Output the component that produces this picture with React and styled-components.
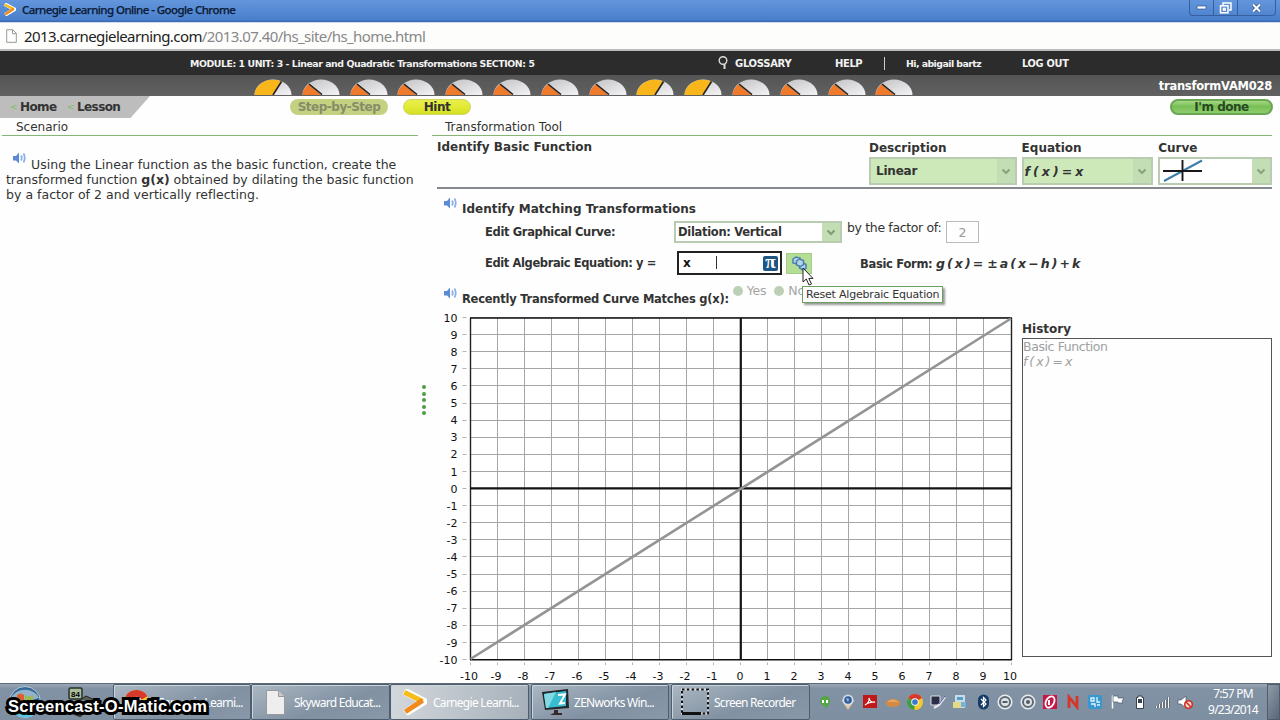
import React from "react";
import styled, { createGlobalStyle } from "styled-components";

const gauges = [
  "full", "low", "low", "low", "low", "low", "low",
  "low", "full", "full", "low", "low", "low", "low",
];
const ticks = Array.from({ length: 21 }, (_, i) => i - 10);

const Speaker = () => (
  <svg width="13" height="12" viewBox="0 0 13 12">
    <path d="M0 4h3l3-3.5v11L3 8.5H0z" fill="#5b8bd6" />
    <path d="M8 3.5q1.500 2.500 0 5M10.500 1.500q2.500 4.500 0 9" stroke="#8fb0e6" strokeWidth="1.800" fill="none" />
  </svg>
);

const Chevron = ({ color = "#8aa37c" }) => (
  <svg width="10" height="7" viewBox="0 0 10 7">
    <path d="M1.500 1.500L5 5l3.500-3.500" stroke={color} strokeWidth="2.200" fill="none" />
  </svg>
);

const CarnegieLogo = ({ size }) => (
  <svg width={size} height={size} viewBox="0 0 24 24">
    <path d="M3 2l18 9.500L4 22" fill="none" stroke="#fff" strokeWidth="7" />
    <path d="M3 3l17 8.500" stroke="#f6bd1a" strokeWidth="4.600" />
    <path d="M20 10.500L4 21" stroke="#f08a1c" strokeWidth="4.600" />
  </svg>
);

const ChromeIcon = ({ size }) => (
  <svg width={size} height={size} viewBox="0 0 24 24">
    <circle cx="12" cy="12" r="12" fill="#f3c92c" />
    <path d="M12 12L1.600 6A12 12 0 0 1 22.400 6z" fill="#d8392b" />
    <path d="M12 12L1.600 6A12 12 0 0 0 11 24z" fill="#3f9d49" />
    <circle cx="12" cy="12" r="5.600" fill="#fff" />
    <circle cx="12" cy="12" r="4.300" fill="#3c78c8" />
  </svg>
);

const Gauge = ({ type }) => (
  <svg width="38" height="16" viewBox="0 0 38 16">
    <path d="M0.500 16A18.500 15.500 0 0 1 37.500 16z" fill="url(#dial)" />
    {type === "full" ? (
      <>
        <path d="M0.500 16A18.500 15.500 0 0 1 27.500 2.500L19 16z" fill="#f8b61b" />
        <path d="M19 16L27.500 2.500" stroke="#222" strokeWidth="1.600" />
      </>
    ) : (
      <>
        <path d="M0.500 16A18.500 15.500 0 0 1 7 5L19 16z" fill="#ef7a2b" />
        <path d="M7 5L20 15.500" stroke="#222" strokeWidth="1.600" />
      </>
    )}
  </svg>
);

const Graph = () => (
  <svg width="581" height="375" viewBox="437 308 581 375">
    <rect x="470" y="318" width="541" height="342" fill="#fff" />
    {ticks.map((t) => {
      const x = Math.round(740 + t * 27.05) + 0.5;
      const y = Math.round(488 - t * 17.1) + 0.5;
      return (
        <g key={t} stroke="#a6a6a6">
          <path d={`M${x} 318V660M470 ${y}H1011`} />
          <path d={`M${x} 662.5v2.5M462.5 ${y}h4`} stroke="#b5b5b5" />
        </g>
      );
    })}
    <path d="M470.500 318V660" stroke="#222" strokeWidth="1.400" />
    <path d="M1011.500 318V660" stroke="#222" strokeWidth="1.400" />
    <path d="M470 318H1012M470 659.700H1012" stroke="#111" strokeWidth="1.400" />
    <path d="M470 488.300H1011M740.800 318V660" stroke="#151515" strokeWidth="2.200" />
    <path d="M470.500 659L1011 318.500" stroke="#949494" strokeWidth="2.600" />
    {ticks.map((t) => (
      <g key={t} fontFamily="DejaVu Sans" fontSize="11" fill="#111">
        <text x="457.500" y={492.6 - t * 17.1} textAnchor="end">{t}</text>
        <text x={740 + t * 27 - (t < 0 ? 1 : 0)} y="680" textAnchor="middle">{t}</text>
      </g>
    ))}
  </svg>
);

const App = () => {
  return (
    <Window>
      <Global />
      <svg width="0" height="0" style={{ position: "absolute" }}>
        <linearGradient id="dial" x1="0" y1="0" x2="1" y2="1">
          <stop offset="0" stopColor="#bfbfc2" />
          <stop offset="1" stopColor="#f4f4f6" />
        </linearGradient>
      </svg>
      <TitleBar>
        <CarnegieLogo size={13} />
        <WindowTitle>Carnegie Learning Online - Google Chrome</WindowTitle>
        <WindowButtons>
          <WindowButton $w={23}>
            <svg width="11" height="5"><rect x="1" y="1" width="9" height="3" fill="#fff" stroke="#34568c" strokeWidth=".7" /></svg>
          </WindowButton>
          <WindowButton $w={24}>
            <svg width="13" height="12" viewBox="0 0 13 12" fill="none" stroke="#fff" strokeWidth="1.500">
              <path d="M4 3V1h8v7h-2" /><rect x="1.500" y="3.800" width="7.500" height="7" /><rect x="4.500" y="6.500" width="1.600" height="1.600" />
            </svg>
          </WindowButton>
          <WindowButton $w={38}>
            <svg width="9" height="8" viewBox="0 0 9 8"><path d="M1 .5L8 7.500M8 .5L1 7.500" stroke="#33558b" strokeWidth="3.400" /><path d="M1 .5L8 7.500M8 .5L1 7.500" stroke="#fff" strokeWidth="2" /></svg>
          </WindowButton>
        </WindowButtons>
      </TitleBar>
      <AddressBar>
        <svg width="11" height="14" viewBox="0 0 11 14"><path d="M.7.7h6l3.600 3.600v9H.7zM6.500.7v4h4" fill="#fff" stroke="#999" /></svg>
        <Url><b>2013.carnegielearning.com</b>/2013.07.40/hs_site/hs_home.html</Url>
      </AddressBar>
      <NavBar>
        <NavText $left={190} $w={528} $size={9.4} $ls={-0.44}>MODULE: 1 UNIT: 3 - Linear and Quadratic Transformations SECTION: 5</NavText>
        <svg width="12" height="14" viewBox="0 0 12 14" fill="none" stroke="#ddd"><circle cx="5" cy="4.500" r="3.800" strokeWidth="1.400" /><path d="M6.500 8v5" strokeWidth="2" /></svg>
        <NavText $left={5} $w={100} $ls={-0.3}>GLOSSARY</NavText>
        <NavText $w={49} $ls={-0.4}>HELP</NavText>
        <NavDivider />
        <NavText $left={21} $w={116} $size={9.4} $ls={-0.55}>Hi, abigail bartz</NavText>
        <NavText $w={60} $size={9.8} $ls={-0.3}>LOG OUT</NavText>
      </NavBar>
      <GaugeBar>
        <Gauges>{gauges.map((type, i) => <Gauge key={i} type={type} />)}</Gauges>
        <ProblemName>transformVAM028</ProblemName>
      </GaugeBar>
      <Toolbar>
        <Crumbs>
          <i>&lt;</i><Crumb $w={47}>Home</Crumb>
          <i>&lt;</i><Crumb $w={50}>Lesson</Crumb>
        </Crumbs>
        <Pill $left={140} $w={98} $kind="step">Step-by-Step</Pill>
        <Pill $left={15} $w={68} $kind="hint">Hint</Pill>
        <Pill $left={699} $w={103} $kind="done">I'm done</Pill>
      </Toolbar>
      <Main>
        <Scenario>
          <PaneTitle $pad={14}>Scenario</PaneTitle>
          <ScenarioText>
            <Speaker />
            <p>
              <Line $ls={0.03}>Using the Linear function as the basic function, create the</Line><br />
              <Line $ls={-0.03}>transformed function <b>g(x)</b> obtained by dilating the basic function</Line><br />
              <Line $ls={0.03}>by a factor of 2 and vertically reflecting.</Line>
            </p>
          </ScenarioText>
        </Scenario>
        <Splitter>{[0, 1, 2, 3, 4].map((i) => <Dot key={i} />)}</Splitter>
        <Tool>
          <PaneTitle $pad={13}>Transformation Tool</PaneTitle>
          <BasicFunction>
            <Heading>Identify Basic Function</Heading>
            <Field $w={148}>
              <FieldLabel>Description</FieldLabel>
              <Select>Linear<Arrow><Chevron /></Arrow></Select>
            </Field>
            <Field $w={132}>
              <FieldLabel>Equation</FieldLabel>
              <Select $pad={1}><MathText $ws={-1.3}>f ( x ) = x</MathText><Arrow><Chevron /></Arrow></Select>
            </Field>
            <Field $w={114}>
              <FieldLabel>Curve</FieldLabel>
              <Select $white $pad={3}>
                <svg width="42" height="24" viewBox="0 0 42 24"><path d="M1 22L39 1.500" stroke="#3d7da8" strokeWidth="2" /><path d="M0 12h39M19.500 1v21" stroke="#181818" strokeWidth="1.900" /></svg>
                <Arrow><Chevron /></Arrow>
              </Select>
            </Field>
          </BasicFunction>
          <StepTitle $h={32}>
            <Speaker /><Heading>Identify Matching Transformations</Heading>
          </StepTitle>
          <EditRow $h={22} $gap={8}>
            <EditLabel $w={189} $ls={-0.35}>Edit Graphical Curve:</EditLabel>
            <CurveSelect $pad={2}>Dilation: Vertical<Arrow><Chevron color="#7f9f6f" /></Arrow></CurveSelect>
            <FactorLabel>by the factor of:</FactorLabel>
            <FactorInput>2</FactorInput>
          </EditRow>
          <EditRow $h={24} $gap={4}>
            <EditLabel $w={192} $ls={-0.4}>Edit Algebraic Equation: y =</EditLabel>
            <EquationInput><b>x</b><Caret /><PiKey>π</PiKey></EquationInput>
            <ResetButton>
              <svg width="15" height="15" viewBox="0 0 15 15" fill="#b5d3ea" stroke="#4a80ad" strokeWidth="1.500">
                <path d="M1 3l3-2 4 1v4L5 8 1 7z" /><path d="M7.500 8.500l3-2 3.500 2v4l-3 1.500-3.500-2z" /><path d="M4.500 5l3-2 4 1.500v4l-3 2-4-1.500z" />
              </svg>
            </ResetButton>
            <BasicForm>Basic Form: <MathText $ws={-2.3}>g ( x ) = &nbsp;± a ( x − h ) + k</MathText></BasicForm>
          </EditRow>
          <StepTitle $h={29}>
            <Speaker /><Heading $size={11.5} $ls={-0.25} $up>Recently Transformed Curve Matches g(x):</Heading>
            <Choices><Radio />Yes<Radio $left={8} />No</Choices>
          </StepTitle>
          <Results>
            <Graph />
            <History>
              <Heading>History</Heading>
              <HistoryBox>Basic Function<br /><i>f ( x ) = x</i></HistoryBox>
            </History>
          </Results>
        </Tool>
      </Main>
      <Tooltip>Reset Algebraic Equation</Tooltip>
      <Cursor width="13" height="20" viewBox="0 0 13 20"><path d="M1 1v14l3.300-3L7 18l2.500-1-2.700-5.600H11z" fill="#fff" stroke="#222" /></Cursor>
      <Taskbar>
        <StartOrb>
          <svg width="32" height="34" viewBox="0 0 32 34">
            <circle cx="16" cy="17" r="15.500" fill="#356a96" stroke="#b7cad9" />
            <path d="M2 13a15 13 0 0 1 28 0q-14 5-28 0" fill="#93b2ca" />
            <path d="M8 10q4-3 7 0v7q-4-2-7 0z" fill="#dc5f2c" /><path d="M16 10q4 3 8 0v7q-4 3-8 0z" fill="#9bbb4b" />
            <path d="M8 18q4-2 7 0v6q-4-2-7 0z" fill="#3c9bd5" /><path d="M16 18q4 3 8 0v6q-4 3-8 0z" fill="#f2c542" />
            <path d="M5 28q11-8 22 0-10 9-22 0" fill="#52c7e4" />
          </svg>
        </StartOrb>
        <svg width="45" height="34" viewBox="0 0 45 34">
          <path d="M17 20l14-9 11 5-14 9z" fill="#55605a" stroke="#222" /><path d="M20 18l16 4M24 15l16 3" stroke="#98a39a" />
          <rect x="14" y="3" width="13" height="11" rx="1.500" fill="#a8bb99" stroke="#28302a" strokeWidth="1.500" />
          <text x="20.500" y="11.500" fontSize="8" fontWeight="bold" textAnchor="middle" fontFamily="Liberation Sans">84</text>
          <path d="M17 21v7l8 3 8-6" fill="none" stroke="#333" strokeWidth="2" />
        </svg>
        <Task $w={138} $left={13}><ChromeIcon size={25} />Carnegie Learni...</Task>
        <Task $w={139} $pad={12} $gap={6}>
          <svg width="24" height="27" viewBox="0 0 24 27"><path d="M2.500 1.500h12l6 6v18h-18z" fill="#eee" stroke="#999" /><path d="M14.500 1.500v6h6" fill="#ccc" stroke="#999" /></svg>
          Skyward Educat...
        </Task>
        <Task $w={139} $active $gap={6}><CarnegieLogo size={26} />Carnegie Learni...</Task>
        <Task $w={138} $left={2} $gap={3} $pad={9}>
          <svg width="30" height="28" viewBox="0 0 30 28"><path d="M1 4l26-3 1 19-24 2z" fill="#23282c" /><path d="M3 6l22-3v15L5 20z" fill="#38bcd2" /><path d="M3 6l12-2-8 16H5z" fill="#83dae5" /><path d="M17 7l7-.500-5 9 5-.500" fill="none" stroke="#fff" strokeWidth="2" /><path d="M13 22h4v3h4v2H9l4-2z" fill="#3a2929" /></svg>
          ZENworks Win...
        </Task>
        <Task $w={139} $left={2} $gap={4} $pad={8}>
          <svg width="30" height="28" viewBox="0 0 30 28"><rect x="2" y="1.500" width="26" height="24" fill="none" stroke="#fff" strokeOpacity=".6" strokeWidth="2" /><rect x="2" y="1.500" width="26" height="24" fill="none" stroke="#111" strokeWidth="2" strokeDasharray="2.500 2.300" /><path d="M2 25.500h19" stroke="#111" strokeWidth="3" /></svg>
          Screen Recorder
        </Task>
        <Tray>
          <svg viewBox="0 0 16 16"><path d="M8 2q5 0 5 5 0 4-5 8v-3q-5-1-5-5t5-5z" fill="#53a744" /><path d="M5 6h2v3H5zM9 6h2v3H9z" fill="#fff" /></svg>
          <svg viewBox="0 0 16 16"><path d="M8 16L1.500 6h13z" fill="#e6c6a0" /><circle cx="8" cy="6" r="5.500" fill="#d5dbe1" /><circle cx="8" cy="6" r="3.800" fill="#315f9e" /><path d="M6 4l3 1-1 3z" fill="#b6cbd8" /></svg>
          <svg viewBox="0 0 16 16"><rect x="1" y="1" width="14" height="13" fill="#bd1a19" /><path d="M3 11q5-3 4-7 1 5 6 4-6 0-10 3z" fill="none" stroke="#fff" strokeWidth="1.200" /></svg>
          <svg viewBox="0 0 16 16"><ellipse cx="8" cy="9" rx="7.500" ry="4" fill="#d38a45" /><path d="M2 8q6-5 12 0" fill="#e5a763" /></svg>
          <ChromeIcon size={15} />
          <svg viewBox="0 0 16 16"><path d="M1 2h9v9H1z" fill="#2b2d48" stroke="#ddd" /><path d="M15 3L9 11l-5 3" stroke="#e2e4f2" strokeWidth="2.200" fill="none" /><path d="M15 2L9 10" stroke="#555aa0" /></svg>
          <svg viewBox="0 0 16 16"><path d="M3 1h10v13H3z" fill="#c4deeb" /><path d="M1 8h8v6H1z" fill="#e5d987" /><path d="M5 3h6v3H5z" fill="#5a9cc5" /><path d="M9 8h5v5H9z" fill="#74b4d8" /></svg>
          <svg viewBox="0 0 16 16"><rect x="3" y=".5" width="11" height="15" rx="5.500" fill="#143b68" /><path d="M6 5l5 5-2.500 2.500v-9L11 6l-5 5" fill="none" stroke="#fff" strokeWidth="1.200" /></svg>
          <svg viewBox="0 0 16 16"><circle cx="8" cy="8" r="6.800" fill="#5f6c78" stroke="#e8ecef" strokeWidth="1.500" /><circle cx="8" cy="8" r="4" fill="#dde3e6" /><path d="M5.500 8h5" stroke="#505c66" strokeWidth="2" /></svg>
          <svg viewBox="0 0 16 16"><circle cx="8" cy="8" r="6.800" fill="#5f6c78" stroke="#e8ecef" strokeWidth="1.500" /><circle cx="8" cy="8" r="4" fill="#dde3e6" /><circle cx="8" cy="8" r="2" fill="#505c66" /></svg>
          <svg viewBox="0 0 16 16"><rect x="1" y="1" width="14" height="14" fill="#c81646" /><ellipse cx="8" cy="8" rx="4" ry="6" transform="rotate(30 8 8)" fill="none" stroke="#fff" strokeWidth="1.800" /><path d="M7 6v5" stroke="#fff" strokeWidth="2" /></svg>
          <svg viewBox="0 0 16 16"><path d="M4 14V3l8 10V2" fill="none" stroke="#d6362a" strokeWidth="2.800" /></svg>
          <svg viewBox="0 0 16 16"><rect x="1" y="1" width="14" height="14" rx="2" fill="#3798cf" /><path d="M4 4h3v3H4zM10 3v5h3M4 10h4v3M10 11h3" stroke="#e5f4fd" strokeWidth="1.300" fill="none" /></svg>
          <svg viewBox="0 0 16 16"><path d="M2.500 1.500v13" stroke="#fff" strokeWidth="1.500" /><path d="M3 2h5v2h6l-2 3 1 2H8V8H3z" fill="#fff" stroke="#4f5b67" strokeWidth=".7" /></svg>
          <svg viewBox="0 0 16 16"><path d="M6 2h4v1.500h1.500V14.500h-7v-11H6z" fill="#fff" stroke="#34414f" /><path d="M6 5h4v4H6z" fill="#38434e" /></svg>
          <svg viewBox="0 0 16 16"><path d="M1.500 14v-2M4.500 14v-4M7.500 14V8M10.500 14V6M13.500 14V3" stroke="#3d4955" strokeWidth="3" /><path d="M1.500 14v-2M4.500 14v-4M7.500 14V8M10.500 14V6M13.500 14V3" stroke="#f6f6f6" strokeWidth="1.500" /></svg>
          <svg viewBox="0 0 16 16"><path d="M1 6h3l5-4v12L4 10H1z" fill="#fff" stroke="#4b5763" strokeWidth=".7" /><circle cx="11.500" cy="10.500" r="3.800" fill="#f3dad7" stroke="#cf3024" strokeWidth="1.600" /><path d="M9 8l5 5" stroke="#cf3024" strokeWidth="1.600" /></svg>
        </Tray>
        <Clock><span>7:57 PM</span><span>9/23/2014</span></Clock>
        <ShowDesktop />
      </Taskbar>
      <Watermark>Screencast-O-Matic.com</Watermark>
    </Window>
  );
};

export default App;

const Global = createGlobalStyle`
  body { margin: 0; overflow: hidden; }
  * { box-sizing: border-box; }
  svg { flex-shrink: 0; display: block; }
`;

const Window = styled.div`
  position: relative;
  width: 1280px;
  height: 720px;
  display: flex;
  flex-direction: column;
  background: #fdfefd;
  overflow: hidden;
  color: #333;
  font-family: "DejaVu Sans", Verdana, sans-serif;
  font-size: 12.5px;
  white-space: nowrap;
`;

const TitleBar = styled.div`
  height: 22px;
  padding: 0 4px 3px 3px;
  display: flex;
  align-items: center;
  background: linear-gradient(#6396dc, #4a7fcb 90%, #3565ac);
  flex-shrink: 0;
`;
const WindowTitle = styled.span`
  margin-left: 6px;
  font: 500 11.5px "Noto Sans", sans-serif;
  color: #0d1c38;
  letter-spacing: -0.57px;
  -webkit-text-stroke: 0.25px #0d1c38;
`;
const WindowButtons = styled.div`
  margin-left: auto;
  align-self: flex-start;
  display: flex;
  border: 1px solid #365f9f;
  border-top: 0;
  border-radius: 0 0 4px 4px;
`;
const WindowButton = styled.div`
  width: ${(p) => p.$w}px;
  height: 15px;
  display: flex;
  align-items: center;
  justify-content: center;
  & + & {
    border-left: 1px solid #365f9f;
  }
`;

const AddressBar = styled.div`
  height: 29px;
  padding: 0 6px;
  display: flex;
  align-items: center;
  border-top: 1px solid #cfdcef;
  border-bottom: 2px solid #bbb;
  background: #fdfdfc;
  flex-shrink: 0;
`;
const Url = styled.span`
  margin-left: 7px;
  font: 15px "Noto Sans", sans-serif;
  letter-spacing: -0.58px;
  color: #888;
  b {
    font-weight: 400;
    color: #222;
  }
`;

const NavBar = styled.div`
  height: 24px;
  display: flex;
  align-items: center;
  background: #2c2c2c;
  color: #f2f2f2;
  flex-shrink: 0;
`;
const NavText = styled.span`
  margin-left: ${(p) => p.$left || 0}px;
  width: ${(p) => p.$w}px;
  font-weight: 700;
  font-size: ${(p) => p.$size || 10}px;
  letter-spacing: ${(p) => p.$ls || 0}px;
`;
const NavDivider = styled.div`
  width: 1px;
  height: 13px;
  background: #ccc;
`;

const GaugeBar = styled.div`
  height: 21px;
  padding: 4px 8px 1px 254px;
  display: flex;
  justify-content: space-between;
  background: linear-gradient(#555, #616161);
  flex-shrink: 0;
`;
const Gauges = styled.div`
  display: flex;
  gap: 9.8px;
`;
const ProblemName = styled.span`
  color: #fff;
  font-weight: 700;
  font-size: 11.5px;
  letter-spacing: -0.25px;
  line-height: 14px;
`;

const Toolbar = styled.div`
  height: 22px;
  display: flex;
  align-items: center;
  flex-shrink: 0;
`;
const Crumbs = styled.div`
  width: 150px;
  height: 22px;
  padding-left: 10px;
  display: flex;
  align-items: center;
  background: #bdbdbd;
  clip-path: polygon(0 0, 100% 0, 87% 100%, 0 100%);
  i {
    width: 10px;
    font: 9px "DejaVu Sans";
    color: #7cc05e;
  }
`;
const Crumb = styled.span`
  width: ${(p) => p.$w}px;
  font-weight: 700;
  font-size: 12px;
  letter-spacing: -0.6px;
`;
const pills = {
  step: "background: #c3d181; color: #868c6a;",
  hint: "background: linear-gradient(#e9ee4e, #e2ea35 50%, #d5df22); border: 1px solid #cdd765; color: #333;",
  done: "background: linear-gradient(#a5d983, #79bf55 45%, #8fcd6e); border: 2px solid #6ba653; color: #274a22;",
};
const Pill = styled.div`
  margin-left: ${(p) => p.$left}px;
  width: ${(p) => p.$w}px;
  height: 16px;
  border-radius: 8px;
  display: flex;
  align-items: center;
  justify-content: center;
  font-weight: 700;
  font-size: 12px;
  letter-spacing: -0.5px;
  ${(p) => pills[p.$kind]}
`;

const Main = styled.div`
  flex: 1;
  min-height: 0;
  display: flex;
`;
const Scenario = styled.div`
  width: 418px;
  padding-left: 2px;
`;
const PaneTitle = styled.div`
  height: 18px;
  padding-left: ${(p) => p.$pad}px;
  font-size: 12px;
  line-height: 18px;
  border-bottom: 1px solid #84b874;
`;
const ScenarioText = styled.div`
  padding: 16px 0 0 4px;
  svg {
    margin-left: 7px;
  }
  p {
    margin: -7px 0 0;
    line-height: 15px;
    text-indent: 25px;
  }
`;
const Line = styled.span`
  letter-spacing: ${(p) => p.$ls}px;
`;
const Splitter = styled.div`
  width: 12px;
  padding: 267px 0 0 4px;
  display: flex;
  flex-direction: column;
  gap: 2.6px;
`;
const Dot = styled.div`
  width: 4px;
  height: 4px;
  border-radius: 2px;
  background: #4f9c45;
`;

const Tool = styled.div`
  width: 842px;
  padding-left: 2px;
  display: flex;
  flex-direction: column;
  > * {
    flex-shrink: 0;
  }
`;
const Heading = styled.span`
  font-weight: 700;
  font-size: ${(p) => p.$size || 12}px;
  letter-spacing: ${(p) => p.$ls || 0}px;
`;
const BasicFunction = styled.div`
  height: 53px;
  margin-left: 5px;
  padding-top: 3px;
  display: flex;
  gap: 5px;
  border-bottom: 2px solid #85888c;
  > span {
    width: 428px;
    margin-top: 1px;
  }
`;
const Field = styled.div`
  width: ${(p) => p.$w}px;
`;
const FieldLabel = styled.div`
  height: 18px;
  line-height: 18px;
  font-weight: 700;
  font-size: 12px;
`;
const Select = styled.div`
  height: 28px;
  padding-left: ${(p) => p.$pad || 5}px;
  display: flex;
  align-items: center;
  border: 2px solid #b9cbb0;
  background: ${(p) => (p.$white ? "#fff" : "#cde9b9")};
  font-weight: 700;
  font-size: 12px;
  letter-spacing: -0.2px;
`;
const Arrow = styled.div`
  width: 18px;
  height: 100%;
  margin-left: auto;
  display: flex;
  align-items: center;
  justify-content: center;
  background: #c3ddb4;
`;
const MathText = styled.span`
  font: italic 700 12.5px "DejaVu Sans";
  letter-spacing: 0;
  word-spacing: ${(p) => p.$ws}px;
`;

const StepTitle = styled.div`
  height: ${(p) => p.$h}px;
  padding: 8px 0 0 12px;
  display: flex;
  gap: 5px;
  > ${Heading} {
    margin-top: 5px;
  }
`;
const EditRow = styled.div`
  height: ${(p) => p.$h}px;
  margin-bottom: ${(p) => p.$gap}px;
  padding-left: 53px;
  display: flex;
  align-items: center;
`;
const EditLabel = styled.span`
  width: ${(p) => p.$w}px;
  margin-top: -1px;
  font-weight: 700;
  font-size: 11.5px;
  letter-spacing: ${(p) => p.$ls}px;
`;
const CurveSelect = styled(Select)`
  width: 168px;
  height: 22px;
  background: #fff;
  font-size: 11.5px;
  letter-spacing: -0.3px;
`;
const FactorLabel = styled.span`
  width: 99px;
  margin: -9px 0 0 5px;
  letter-spacing: -0.35px;
`;
const FactorInput = styled.div`
  width: 33px;
  height: 22px;
  border: 1px solid #bbb;
  text-align: center;
  line-height: 21px;
  color: #999;
`;
const EquationInput = styled.div`
  width: 105px;
  height: 24px;
  padding: 0 2px 0 4px;
  display: flex;
  align-items: center;
  border: 2px solid #222;
  background: #fff;
  b {
    font-size: 12px;
    color: #111;
  }
`;
const Caret = styled.div`
  width: 1px;
  height: 13px;
  margin: -2px auto 0 25px;
  background: #333;
`;
const PiKey = styled.div`
  width: 15px;
  height: 15px;
  border-radius: 2px;
  background: #1d5585;
  color: #fff;
  font: 700 19px/12px "Liberation Serif", serif;
  display: flex;
  justify-content: center;
`;
const ResetButton = styled.div`
  width: 26px;
  height: 21px;
  margin: 0 48px 0 4px;
  display: flex;
  align-items: center;
  justify-content: center;
  background: #b4dd96;
  border: 1px solid #a4cd86;
`;
const BasicForm = styled.span`
  font-weight: 700;
  font-size: 11.5px;
  letter-spacing: -0.3px;
`;
const Choices = styled.div`
  margin: -4px 0 0 -1px;
  display: flex;
  height: 15px;
  align-items: center;
  letter-spacing: -0.2px;
  color: #a5a5a5;
`;
const Radio = styled.span`
  width: 10px;
  height: 10px;
  margin: 0 4px 0 ${(p) => p.$left || 0}px;
  border-radius: 5px;
  background: #bdd0b5;
`;

const Results = styled.div`
  margin-left: 5px;
  display: flex;
`;
const History = styled.div`
  width: 250px;
  margin-left: 4px;
  padding-top: 13px;
  > span {
    display: block;
    height: 17px;
    line-height: 17px;
  }
`;
const HistoryBox = styled.div`
  height: 319px;
  border: 1px solid #555;
  color: #a0a0a0;
  line-height: 15px;
  letter-spacing: -0.4px;
  i {
    letter-spacing: 0;
    word-spacing: -2px;
  }
`;

const Tooltip = styled.div`
  position: absolute;
  left: 802px;
  top: 286px;
  height: 17px;
  padding: 0 3px;
  border: 1px solid #6ba061;
  background: #fdfefc;
  font-size: 11px;
  letter-spacing: -0.2px;
  line-height: 15px;
  box-shadow: 2px 2px 2px rgba(0, 0, 0, 0.4);
`;
const Cursor = styled.svg`
  position: absolute;
  left: 802px;
  top: 267px;
`;

const Taskbar = styled.div`
  height: 37px;
  display: flex;
  align-items: center;
  border-top: 1px solid #5d6b79;
  background: linear-gradient(#9aa8b7, #8292a5 12%, #7f8fa2);
  flex-shrink: 0;
  > * {
    flex-shrink: 0;
  }
`;
const StartOrb = styled.div`
  width: 55px;
  padding-left: 9px;
`;
const Task = styled.div`
  width: ${(p) => p.$w}px;
  height: 36px;
  margin-left: ${(p) => p.$left || 0}px;
  padding-left: ${(p) => p.$pad || 10}px;
  display: flex;
  align-items: center;
  gap: ${(p) => p.$gap || 8}px;
  border: 1px solid #4f5e6e;
  box-shadow: inset 1px 1px 0 #cdd5dc;
  border-radius: 2px;
  background: ${(p) =>
    p.$active
      ? "linear-gradient(100deg, #d3d8dc, #a6b0ba)"
      : "linear-gradient(160deg, #abb7c3, #8191a2 60%, #8898a8)"};
  color: #fff;
  font: 12px "Noto Sans", sans-serif;
  letter-spacing: -0.72px;
`;
const Tray = styled.div`
  margin-left: 7px;
  display: flex;
  gap: 6.5px;
  svg {
    width: 16px;
    height: 16px;
  }
`;
const Clock = styled.div`
  width: 68px;
  margin-left: 6px;
  display: flex;
  flex-direction: column;
  align-items: center;
  color: #fff;
  font: 12px/16px "Noto Sans", sans-serif;
  letter-spacing: -0.8px;
`;
const ShowDesktop = styled.div`
  width: 13px;
  height: 36px;
  margin-left: auto;
  border: 1px solid #4f5c69;
  background: linear-gradient(120deg, #8e9aa6, #59677a);
`;
const Watermark = styled.div`
  position: absolute;
  left: 8px;
  top: 697px;
  font: 700 16.5px/18px "Liberation Sans", sans-serif;
  letter-spacing: 0.3px;
  color: #fff;
  -webkit-text-stroke: 6px #000;
  paint-order: stroke fill;
`;
